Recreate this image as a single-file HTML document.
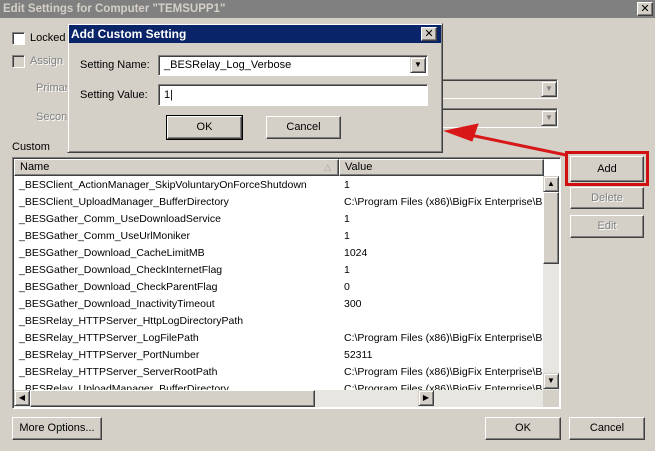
<!DOCTYPE html>
<html><head><style>
*{margin:0;padding:0;box-sizing:border-box}
body{width:655px;height:451px;background:#d4d0c8;font:11px "Liberation Sans",sans-serif;color:#000;position:relative;overflow:hidden}
.a{position:absolute}
.btn{position:absolute;background:#d4d0c8;border:1px solid;border-color:#fff #404040 #404040 #fff;box-shadow:inset -1px -1px #808080;text-align:center}
.sunk{position:absolute;background:#fff;border:1px solid;border-color:#808080 #fff #fff #808080;box-shadow:inset 1px 1px #404040}
.dis{color:#808080;text-shadow:1px 1px #fff}
.row{position:absolute;left:19px;height:17px;line-height:17px;white-space:nowrap;font-size:10.5px}
.v{position:absolute;left:325px;white-space:nowrap;width:198px;overflow:hidden}
.arr{position:absolute;width:16px;height:16px;background:#d4d0c8;border:1px solid;border-color:#d4d0c8 #404040 #404040 #d4d0c8;box-shadow:inset 1px 1px #fff,inset -1px -1px #808080;font-size:8px;text-align:center;line-height:14px}
</style></head><body>
<div class="a" style="left:0;top:0;width:655px;height:18px;background:#808080;color:#d4d0c8;font-weight:bold;font-size:11.5px;line-height:18px;padding-left:3px">Edit Settings for Computer "TEMSUPP1"</div>
<div class="btn" style="left:637px;top:2px;width:16px;height:14px;line-height:12px;font-size:11px">✕</div>

<div class="sunk" style="left:12px;top:32px;width:13px;height:13px"></div>
<div class="a" style="left:30px;top:32px">Locked</div>
<div class="sunk" style="left:12px;top:55px;width:13px;height:13px;background:#d4d0c8"></div>
<div class="a dis" style="left:30px;top:55px">Assign R</div>
<div class="a dis" style="left:36px;top:82px">Primar</div>
<div class="a dis" style="left:36px;top:111px">Secon</div>
<div class="sunk" style="left:440px;top:79px;width:118px;height:20px;background:#d4d0c8"></div>
<div class="arr" style="left:541px;top:81px;color:#808080">▼</div>
<div class="sunk" style="left:440px;top:108px;width:118px;height:20px;background:#d4d0c8"></div>
<div class="arr" style="left:541px;top:110px;color:#808080">▼</div>

<div class="a" style="left:12px;top:141px">Custom</div>
<div class="sunk" style="left:12px;top:157px;width:549px;height:252px"></div>
<div class="btn" style="left:14px;top:159px;width:325px;height:17px;line-height:15px;text-align:left;padding-left:5px">Name<span style="position:absolute;right:7px;color:#a0a0a0;font-size:9px">△</span></div>
<div class="btn" style="left:339px;top:159px;width:205px;height:17px;line-height:15px;text-align:left;padding-left:5px">Value</div>
<div class="a" style="left:14px;top:176px;width:529px;height:214px;overflow:hidden">
<div style="position:relative;top:1px;left:-14px">
<div class="row" style="top:0">_BESClient_ActionManager_SkipVoluntaryOnForceShutdown<span class="v">1</span></div>
<div class="row" style="top:17px">_BESClient_UploadManager_BufferDirectory<span class="v">C:\Program Files (x86)\BigFix Enterprise\B</span></div>
<div class="row" style="top:34px">_BESGather_Comm_UseDownloadService<span class="v">1</span></div>
<div class="row" style="top:51px">_BESGather_Comm_UseUrlMoniker<span class="v">1</span></div>
<div class="row" style="top:68px">_BESGather_Download_CacheLimitMB<span class="v">1024</span></div>
<div class="row" style="top:85px">_BESGather_Download_CheckInternetFlag<span class="v">1</span></div>
<div class="row" style="top:102px">_BESGather_Download_CheckParentFlag<span class="v">0</span></div>
<div class="row" style="top:119px">_BESGather_Download_InactivityTimeout<span class="v">300</span></div>
<div class="row" style="top:136px">_BESRelay_HTTPServer_HttpLogDirectoryPath</div>
<div class="row" style="top:153px">_BESRelay_HTTPServer_LogFilePath<span class="v">C:\Program Files (x86)\BigFix Enterprise\B</span></div>
<div class="row" style="top:170px">_BESRelay_HTTPServer_PortNumber<span class="v">52311</span></div>
<div class="row" style="top:187px">_BESRelay_HTTPServer_ServerRootPath<span class="v">C:\Program Files (x86)\BigFix Enterprise\B</span></div>
<div class="row" style="top:204px">_BESRelay_UploadManager_BufferDirectory<span class="v">C:\Program Files (x86)\BigFix Enterprise\B</span></div>
</div></div>
<div class="a" style="left:543px;top:176px;width:16px;height:214px;background:#e8e6e0"></div>
<div class="arr" style="left:543px;top:176px">▲</div>
<div class="btn" style="left:543px;top:192px;width:16px;height:72px"></div>
<div class="arr" style="left:543px;top:373px">▼</div>
<div class="a" style="left:14px;top:390px;width:529px;height:17px;background:#e8e6e0"></div>
<div class="arr" style="left:14px;top:390px">◀</div>
<div class="btn" style="left:30px;top:390px;width:285px;height:17px"></div>
<div class="arr" style="left:418px;top:390px">▶</div>
<div class="a" style="left:543px;top:390px;width:16px;height:17px;background:#d4d0c8"></div>

<div class="btn" style="left:570px;top:156px;width:74px;height:26px;line-height:24px">Add</div>
<div class="a" style="left:565px;top:151px;width:84px;height:35px;border:3px solid #d01010"></div>
<div class="btn dis" style="left:570px;top:187px;width:74px;height:22px;line-height:20px">Delete</div>
<div class="btn dis" style="left:570px;top:215px;width:74px;height:23px;line-height:21px">Edit</div>

<div class="btn" style="left:12px;top:417px;width:90px;height:23px;line-height:21px">More Options...</div>
<div class="btn" style="left:485px;top:417px;width:76px;height:23px;line-height:21px">OK</div>
<div class="btn" style="left:569px;top:417px;width:76px;height:23px;line-height:21px">Cancel</div>

<svg class="a" style="left:0;top:0" width="655" height="451"><g fill="#d81818" stroke="#d81818"><line x1="566" y1="155" x2="470" y2="135" stroke-width="3"/><polygon points="445,131 478,124 472,141"/></g></svg>

<div class="a" style="left:67px;top:23px;width:376px;height:130px;background:#d4d0c8;border:1px solid;border-color:#d4d0c8 #404040 #404040 #d4d0c8;box-shadow:inset 1px 1px #fff,inset -1px -1px #808080"></div>
<div class="a" style="left:69px;top:25px;width:372px;height:18px;background:#0a246a;color:#fff;font-weight:bold;font-size:12px;line-height:18px;padding-left:2px">Add Custom Setting</div>
<div class="btn" style="left:421px;top:27px;width:16px;height:14px;line-height:12px;font-size:11px">✕</div>
<div class="a" style="left:80px;top:59px">Setting Name:</div>
<div class="sunk" style="left:158px;top:55px;width:270px;height:21px;padding:3px 5px">_BESRelay_Log_Verbose</div>
<div class="arr" style="left:410px;top:57px">▼</div>
<div class="a" style="left:80px;top:89px">Setting Value:</div>
<div class="sunk" style="left:158px;top:84px;width:270px;height:22px;padding:4px 5px">1|</div>
<div class="btn" style="left:167px;top:116px;width:75px;height:23px;line-height:21px;outline:1px solid #000">OK</div>
<div class="btn" style="left:266px;top:116px;width:75px;height:23px;line-height:21px">Cancel</div>
</body></html>
